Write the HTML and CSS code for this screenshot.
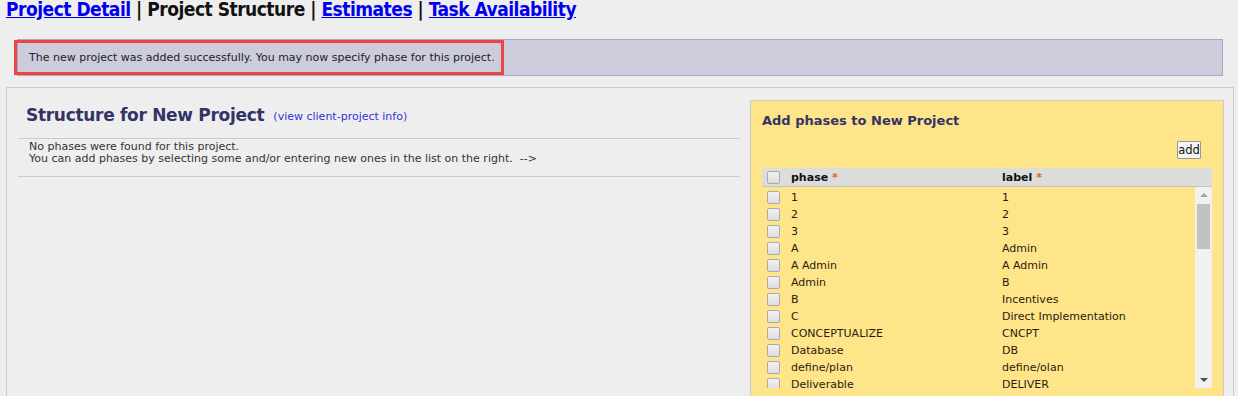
FILE: index.html
```html
<!DOCTYPE html>
<html>
<head>
<meta charset="utf-8">
<link rel="stylesheet" href="styles.css">
</head>
<body>
<div class="nav"><a href="#">Project Detail</a> | <span class="cur">Project Structure</span> | <a href="#">Estimates</a> | <a href="#">Task Availability</a></div>

<div class="msg"><span class="msg-text">The new project was added successfully. You may now specify phase for this project.</span></div>

<div class="main">
  <div class="left">
    <div class="heading"><h1>Structure for New Project</h1><a class="info" href="#">(view client-project info)</a></div>
    <div class="note">No phases were found for this project.<br>You can add phases by selecting some and/or entering new ones in the list on the right.&nbsp; --&gt;</div>
  </div>
  <div class="right">
    <h2>Add phases to New Project</h2>
    <div class="btnrow"><button class="add">add</button></div>
    <div class="table">
      <div class="thead">
        <span class="cb"></span><span class="c1">phase <i>*</i></span><span class="c2">label <i>*</i></span>
      </div>
      <div class="tbody">
        <div class="rows">
          <div class="row"><span class="cb"></span><span class="c1">1</span><span class="c2">1</span></div>
          <div class="row"><span class="cb"></span><span class="c1">2</span><span class="c2">2</span></div>
          <div class="row"><span class="cb"></span><span class="c1">3</span><span class="c2">3</span></div>
          <div class="row"><span class="cb"></span><span class="c1">A</span><span class="c2">Admin</span></div>
          <div class="row"><span class="cb"></span><span class="c1">A Admin</span><span class="c2">A Admin</span></div>
          <div class="row"><span class="cb"></span><span class="c1">Admin</span><span class="c2">B</span></div>
          <div class="row"><span class="cb"></span><span class="c1">B</span><span class="c2">Incentives</span></div>
          <div class="row"><span class="cb"></span><span class="c1">C</span><span class="c2">Direct Implementation</span></div>
          <div class="row"><span class="cb"></span><span class="c1">CONCEPTUALIZE</span><span class="c2">CNCPT</span></div>
          <div class="row"><span class="cb"></span><span class="c1">Database</span><span class="c2">DB</span></div>
          <div class="row"><span class="cb"></span><span class="c1">define/plan</span><span class="c2">define/olan</span></div>
          <div class="row"><span class="cb"></span><span class="c1">Deliverable</span><span class="c2">DELIVER</span></div>
        </div>
        <div class="sbar">
          <span class="arr up"></span>
          <span class="thumb"></span>
          <span class="arr down"></span>
        </div>
      </div>
    </div>
  </div>
</div>
</body>
</html>
```

FILE: styles.css
```css
html, body {
  margin: 0;
  padding: 0;
  background: #eeeeee;
  font-family: "DejaVu Sans", Verdana, sans-serif;
  color: #222;
  overflow: hidden;
}

.nav {
  font-family: "DejaVu Sans Condensed", "DejaVu Sans", sans-serif;
  font-size: 19px;
  font-weight: bold;
  line-height: 19px;
  padding-left: 6px;
  margin-top: 0;
  color: #111;
  white-space: nowrap;
  letter-spacing: -0.5px;
}
.nav a { color: #0000ee; text-decoration: underline; }

.msg {
  margin: 20px 15px 0 17px;
  height: 35px;
  background: #ccccdc;
  border: 1px solid #aaaabd;
  font-size: 11px;
}
.msg-text {
  display: inline-block;
  box-sizing: border-box;
  margin: 0 0 0 -4px;
  height: 35px;
  line-height: 29px;
  padding: 0 0 0 12px;
  width: 490px;
  border: 3px solid #ee4444;
  color: #222;
}

.main {
  margin: 11px 4px 0 6px;
  border: 1px solid #cccccc;
  border-bottom: none;
  padding: 12px 9px 0 11px;
  display: flex;
  align-items: flex-start;
  height: 330px;
}

.left {
  width: 722px;
  flex: none;
}
.heading {
  height: 39px;
  display: flex;
  align-items: center;
  padding-left: 8px;
  gap: 9px;
  border-bottom: 1px solid #cccccc;
  box-sizing: border-box;
  padding-bottom: 8px;
}
.heading h1 {
  margin: 0;
  font-size: 17px;
  color: #333366;
  font-weight: bold;
  letter-spacing: -0.3px;
}
.heading .info {
  font-size: 11px;
  color: #3333dd;
  text-decoration: none;
  padding-top: 2px;
}
.note {
  font-size: 11px;
  line-height: 12px;
  padding: 2px 0 11px 11px;
  border-bottom: 1px solid #cccccc;
  color: #333;
}

.right {
  margin-left: 10px;
  width: 474px;
  box-sizing: border-box;
  flex: none;
  background: #ffe589;
  border: 1px solid #cccccc;
  height: 340px;
  padding: 0 11px 0 11px;
}
.right h2 {
  margin: 12px 0 0 0;
  font-size: 13px;
  line-height: 16px;
  color: #333366;
}
.btnrow {
  display: flex;
  justify-content: flex-end;
  margin-top: 12px;
  padding-right: 11px;
}
.add {
  font-family: "DejaVu Sans", Verdana, sans-serif;
  font-size: 11.5px;
  height: 18px;
  width: 24px;
  padding: 0;
  line-height: 14px;
  background: #f4f4f4;
  border: 1px solid #999999;
  border-radius: 1px;
  color: #111;
}
.table {
  margin-top: 9px;
  font-size: 11px;
}
.thead {
  display: flex;
  align-items: center;
  height: 18px;
  background: #dddddd;
  border-bottom: 1px solid #c4c4c4;
  font-weight: bold;
  color: #111;
}
.thead i {
  font-style: normal;
  color: #d2691e;
  font-weight: bold;
}
.cb {
  width: 11px;
  height: 11px;
  margin-left: 5px;
  border: 1px solid #aaaaaa;
  border-radius: 2px;
  background: linear-gradient(#f2f2f2, #dedede);
  flex: none;
}
.c1 { width: 211px; margin-left: 11px; flex: none; }
.c2 { flex: 1; }

.tbody {
  display: flex;
  height: 201px;
  overflow: hidden;
}
.rows {
  flex: 1;
  padding-top: 2px;
  overflow: hidden;
}
.row {
  display: flex;
  align-items: center;
  height: 17px;
  color: #2a1a10;
}
.sbar {
  width: 17px;
  flex: none;
  background: #f1f1f1;
  display: flex;
  flex-direction: column;
  align-items: center;
}
.arr {
  width: 0;
  height: 0;
  border-left: 4px solid transparent;
  border-right: 4px solid transparent;
}
.arr.up {
  margin-top: 6px;
  border-bottom: 4px solid #a3a3a3;
}
.thumb {
  width: 13px;
  height: 45px;
  background: #c1c1c1;
  margin-top: 7px;
}
.arr.down {
  margin-top: auto;
  margin-bottom: 6px;
  border-top: 4px solid #505050;
}
```
